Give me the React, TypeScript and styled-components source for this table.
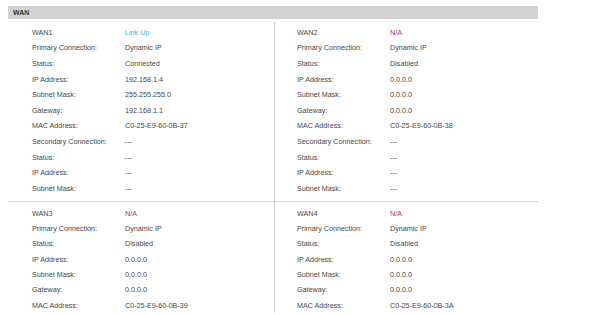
import * as React from "react";
import styled, { createGlobalStyle } from "styled-components";

const GlobalStyle = createGlobalStyle`
  html, body {
    margin: 0;
    padding: 0;
    background: #fff;
  }
  body {
    font-family: "Liberation Sans", Arial, sans-serif;
  }
`

type Row = { label: string, value: string, status?: "up" | "na" }

const wans: { rows: Row[] }[] = [
  {
    rows: [
      { label: "WAN1", value: "Link Up", status: "up" },
      { label: "Primary Connection:", value: "Dynamic IP" },
      { label: "Status:", value: "Connected" },
      { label: "IP Address:", value: "192.168.1.4" },
      { label: "Subnet Mask:", value: "255.255.255.0" },
      { label: "Gateway:", value: "192.168.1.1" },
      { label: "MAC Address:", value: "C0-25-E9-60-0B-37" },
      { label: "Secondary Connection:", value: "---" },
      { label: "Status:", value: "---" },
      { label: "IP Address:", value: "---" },
      { label: "Subnet Mask:", value: "---" },
    ],
  },
  {
    rows: [
      { label: "WAN2", value: "N/A", status: "na" },
      { label: "Primary Connection:", value: "Dynamic IP" },
      { label: "Status:", value: "Disabled" },
      { label: "IP Address:", value: "0.0.0.0" },
      { label: "Subnet Mask:", value: "0.0.0.0" },
      { label: "Gateway:", value: "0.0.0.0" },
      { label: "MAC Address:", value: "C0-25-E9-60-0B-38" },
      { label: "Secondary Connection:", value: "---" },
      { label: "Status:", value: "---" },
      { label: "IP Address:", value: "---" },
      { label: "Subnet Mask:", value: "---" },
    ],
  },
  {
    rows: [
      { label: "WAN3", value: "N/A", status: "na" },
      { label: "Primary Connection:", value: "Dynamic IP" },
      { label: "Status:", value: "Disabled" },
      { label: "IP Address:", value: "0.0.0.0" },
      { label: "Subnet Mask:", value: "0.0.0.0" },
      { label: "Gateway:", value: "0.0.0.0" },
      { label: "MAC Address:", value: "C0-25-E9-60-0B-39" },
    ],
  },
  {
    rows: [
      { label: "WAN4", value: "N/A", status: "na" },
      { label: "Primary Connection:", value: "Dynamic IP" },
      { label: "Status:", value: "Disabled" },
      { label: "IP Address:", value: "0.0.0.0" },
      { label: "Subnet Mask:", value: "0.0.0.0" },
      { label: "Gateway:", value: "0.0.0.0" },
      { label: "MAC Address:", value: "C0-25-E9-60-0B-3A" },
    ],
  },
]

export default function App() {
  return (
    <>
      <GlobalStyle />
      <Wrap>
        <Header>WAN</Header>
        <Grid>
          {wans.map((wan, i) => (
            <Panel key={i} $right={i % 2 === 1} $top={i < 2}>
              {wan.rows.map((row, j) => (
                <InfoRow key={j} $top={i < 2}>
                  <Label>{row.label}</Label>
                  <Value $status={row.status}>{row.value}</Value>
                </InfoRow>
              ))}
            </Panel>
          ))}
        </Grid>
      </Wrap>
    </>
  )
}

const Wrap = styled.div`
  margin: 6px 0 0 8px;
  width: 530px;
  font-size: 7.2px;
  color: #474747;
`

const Header = styled.div`
  height: 13px;
  line-height: 13px;
  background: #d2d2d2;
  padding-left: 5px;
  font-weight: bold;
  font-size: 7px;
  color: #3a3a3a;
`

const Grid = styled.div`
  display: grid;
  grid-template-columns: 266px 264px;
  padding-top: 3px;
`

type PanelProps = { $right: boolean, $top: boolean }

const Panel = styled.div<PanelProps>`
  display: flex;
  flex-direction: column;
  padding-left: ${(p) => (p.$right ? "22px" : "24px")};
  padding-top: ${(p) => (p.$top ? "2.5px" : "3.5px")};
  padding-bottom: ${(p) => (p.$top ? "5px" : "0")};
  border-left: ${(p) => (p.$right ? "1px solid #d4d4d4" : "0")};
  border-bottom: ${(p) => (p.$top ? "1px solid #d4d4d4" : "0")};
`

const InfoRow = styled.div<{ $top: boolean }>`
  display: flex;
  align-items: center;
  height: ${(p) => (p.$top ? "15.6px" : "15.33px")};
`

const Label = styled.div`
  width: 93px;
  flex-shrink: 0;
`

const Value = styled.div<{ $status?: "up" | "na" }>`
  color: ${(p) =>
    p.$status === "up" ? "#46b6c8" : p.$status === "na" ? "#b23366" : "#474747"};
`
